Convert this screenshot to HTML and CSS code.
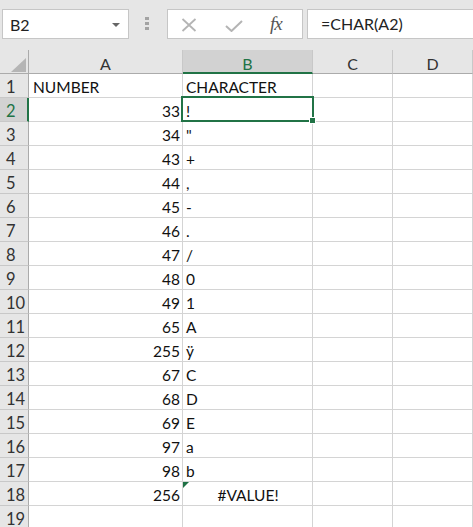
FILE: index.html
```html
<!DOCTYPE html>
<html>
<head>
<meta charset="utf-8">
<link rel="stylesheet" href="styles.css">
</head>
<body>
<div class="fbar">
  <div class="namebox"><span class="ref">B2</span><span class="caret"></span></div>
  <div class="grip"><i></i><i></i><i></i></div>
  <div class="btns">
    <svg class="ic-x" width="16" height="14" viewBox="0 0 16 14"><path d="M1.5 1 L14.5 13 M14.5 1 L1.5 13" stroke="#b4b4b4" stroke-width="1.8" fill="none"/></svg>
    <svg class="ic-ok" width="18" height="12" viewBox="0 0 18 12"><path d="M1 6 L6.5 11 L17 1" stroke="#b4b4b4" stroke-width="2" fill="none"/></svg>
    <span class="fx">fx</span>
  </div>
  <div class="finput">=CHAR(A2)</div>
</div>
<div class="sheet">
  <div class="c corner"><svg width="15" height="14" viewBox="0 0 15 14"><polygon points="15,0 15,14 0,14" fill="#b5b5b5"/></svg></div>
  <div class="c ch">A</div>
  <div class="c ch chsel">B</div>
  <div class="c ch">C</div>
  <div class="c ch">D</div>

  <div class="c rh">1</div><div class="c">NUMBER</div><div class="c t">CHARACTER</div><div class="c"></div><div class="c"></div>
  <div class="c rh rhsel">2</div><div class="c n">33</div><div class="c t sel">!<span class="handle"></span></div><div class="c"></div><div class="c"></div>
  <div class="c rh">3</div><div class="c n">34</div><div class="c t">"</div><div class="c"></div><div class="c"></div>
  <div class="c rh">4</div><div class="c n">43</div><div class="c t">+</div><div class="c"></div><div class="c"></div>
  <div class="c rh">5</div><div class="c n">44</div><div class="c t">,</div><div class="c"></div><div class="c"></div>
  <div class="c rh">6</div><div class="c n">45</div><div class="c t">-</div><div class="c"></div><div class="c"></div>
  <div class="c rh">7</div><div class="c n">46</div><div class="c t">.</div><div class="c"></div><div class="c"></div>
  <div class="c rh">8</div><div class="c n">47</div><div class="c t">/</div><div class="c"></div><div class="c"></div>
  <div class="c rh">9</div><div class="c n">48</div><div class="c t">0</div><div class="c"></div><div class="c"></div>
  <div class="c rh">10</div><div class="c n">49</div><div class="c t">1</div><div class="c"></div><div class="c"></div>
  <div class="c rh">11</div><div class="c n">65</div><div class="c t">A</div><div class="c"></div><div class="c"></div>
  <div class="c rh">12</div><div class="c n">255</div><div class="c t">ÿ</div><div class="c"></div><div class="c"></div>
  <div class="c rh">13</div><div class="c n">67</div><div class="c t">C</div><div class="c"></div><div class="c"></div>
  <div class="c rh">14</div><div class="c n">68</div><div class="c t">D</div><div class="c"></div><div class="c"></div>
  <div class="c rh">15</div><div class="c n">69</div><div class="c t">E</div><div class="c"></div><div class="c"></div>
  <div class="c rh">16</div><div class="c n">97</div><div class="c t">a</div><div class="c"></div><div class="c"></div>
  <div class="c rh">17</div><div class="c n">98</div><div class="c t">b</div><div class="c"></div><div class="c"></div>
  <div class="c rh">18</div><div class="c n">256</div><div class="c err"><span class="flag"></span>#VALUE!</div><div class="c"></div><div class="c"></div>
  <div class="c rh">19</div><div class="c"></div><div class="c"></div><div class="c"></div><div class="c"></div>
</div>
</body>
</html>
```
FILE: styles.css
```css
* { box-sizing: border-box; }
html, body {
  margin: 0;
  padding: 0;
  background: #fff;
  overflow: hidden;
}
body {
  width: 473px;
  height: 527px;
  font-family: Lato, "Liberation Sans", sans-serif;
  color: #000;
}

/* formula bar */
.fbar {
  height: 50px;
  background: #e6e6e6;
  display: flex;
  align-items: flex-start;
  padding-top: 9px;
}
.namebox {
  margin-left: 2px;
  width: 127px;
  height: 30px;
  background: #fff;
  border: 1px solid #c6c6c6;
  display: flex;
  align-items: center;
  justify-content: space-between;
  padding: 0 8px 0 7px;
  font-size: 16px;
  color: #222;
}
.caret {
  width: 0;
  height: 0;
  border-left: 4px solid transparent;
  border-right: 4px solid transparent;
  border-top: 4px solid #666;
  margin-top: 1px;
}
.grip {
  margin-left: 16px;
  padding-top: 8px;
  display: flex;
  flex-direction: column;
  gap: 2px;
}
.grip i {
  display: block;
  width: 4px;
  height: 3px;
  background: #a3a3a3;
}
.btns {
  margin-left: 18px;
  width: 136px;
  height: 30px;
  background: #fff;
  border: 1px solid #c6c6c6;
  display: flex;
  align-items: center;
  padding-left: 13px;
}
.ic-x { margin-top: 2px; }
.ic-ok { margin-left: 28px; margin-top: 3px; }
.fx {
  margin-left: 27px;
  font-family: "Liberation Serif", serif;
  font-style: italic;
  font-size: 19px;
  color: #555;
  letter-spacing: -1px;
}
.finput {
  margin-left: 4px;
  flex: 1;
  height: 30px;
  background: #fff;
  border: 1px solid #c6c6c6;
  border-right: none;
  padding-left: 13px;
  font-size: 16px;
  line-height: 28px;
  color: #222;
}

/* grid */
.sheet {
  display: grid;
  grid-template-columns: 29px 154px 130px 80px 80px;
  grid-auto-rows: 24px;
}
.c {
  position: relative;
  border-right: 1px solid #d4d4d4;
  border-bottom: 1px solid #d4d4d4;
  font-size: 15.5px;
  line-height: 23px;
  padding: 2px 3px 0 4px;
  white-space: nowrap;
  color: #111;
}
.n { text-align: right; padding-right: 2px; }
.t { padding-left: 3px; }
.err { text-align: center; }

.ch {
  background: #e6e6e6;
  border-right-color: #c8c8c8;
  border-bottom-color: #ababab;
  text-align: center;
  font-size: 16px;
  line-height: 25px;
  padding: 1px 0 0 0;
  color: #333;
}
.chsel {
  background: #d2d2d2;
  border-bottom: 2px solid #217346;
  color: #217346;
}
.corner {
  background: #e6e6e6;
  border-right-color: #ababab;
  border-bottom-color: #ababab;
  display: flex;
  align-items: flex-end;
  justify-content: flex-end;
  padding: 0 2px 1px 0;
}
.corner svg { display: block; }
.rh {
  background: #e6e6e6;
  border-right-color: #ababab;
  border-bottom-color: #c8c8c8;
  font-size: 16.5px;
  line-height: 24px;
  padding: 1px 0 0 6px;
  color: #333;
}
.rhsel {
  background: #d2d2d2;
  border-right: 2px solid #217346;
  color: #217346;
}

.sel::after {
  content: "";
  position: absolute;
  left: -2px;
  top: -2px;
  right: -2px;
  bottom: -1px;
  border: 2px solid #217346;
  z-index: 2;
}
.handle {
  position: absolute;
  right: -4px;
  bottom: -3px;
  width: 7px;
  height: 7px;
  background: #217346;
  border: 1px solid #fff;
  z-index: 3;
}
.flag {
  position: absolute;
  left: 0;
  top: 0;
  width: 0;
  height: 0;
  border-top: 6px solid #1e7145;
  border-right: 6px solid transparent;
}
```
